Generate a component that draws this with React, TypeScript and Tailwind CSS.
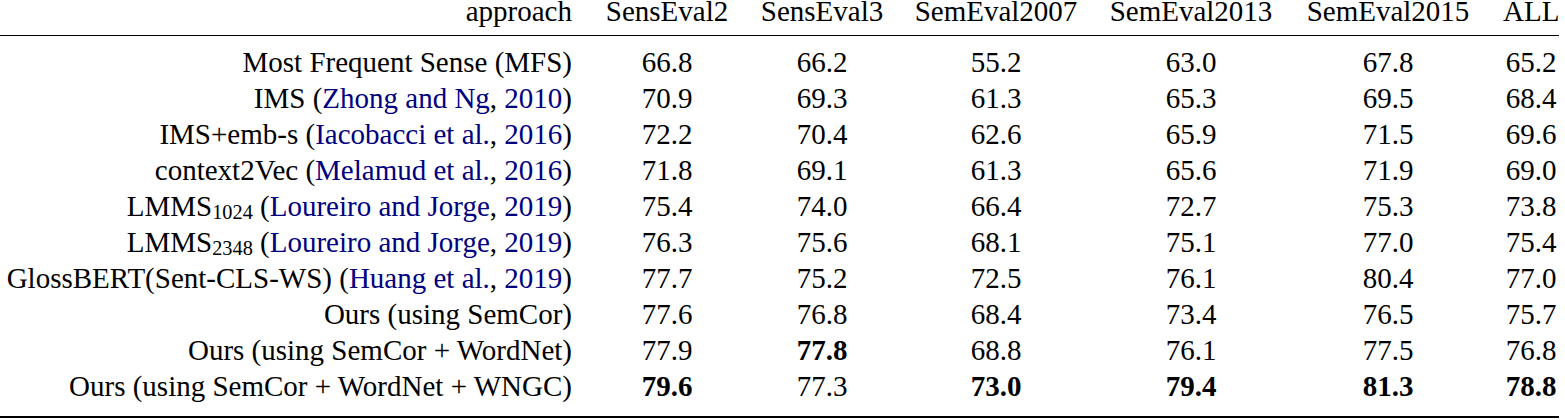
import React from "react";

type Cite = { who: string; year: string };
type Row = {
  name: React.ReactNode;
  cite?: Cite;
  scores: string[];
  bold?: number[];
};

const cols = "grid grid-cols-[590px_154px_156px_192px_198px_196px_73px]";

const rows: Row[] = [
  { name: "Most Frequent Sense (MFS)", scores: ["66.8", "66.2", "55.2", "63.0", "67.8", "65.2"] },
  { name: "IMS", cite: { who: "Zhong and Ng", year: "2010" }, scores: ["70.9", "69.3", "61.3", "65.3", "69.5", "68.4"] },
  { name: "IMS+emb-s", cite: { who: "Iacobacci et al.", year: "2016" }, scores: ["72.2", "70.4", "62.6", "65.9", "71.5", "69.6"] },
  { name: "context2Vec", cite: { who: "Melamud et al.", year: "2016" }, scores: ["71.8", "69.1", "61.3", "65.6", "71.9", "69.0"] },
  {
    name: (
      <>
        LMMS<sub className="text-[0.7em] bottom-[-0.17em]">1024</sub>
      </>
    ),
    cite: { who: "Loureiro and Jorge", year: "2019" },
    scores: ["75.4", "74.0", "66.4", "72.7", "75.3", "73.8"],
  },
  {
    name: (
      <>
        LMMS<sub className="text-[0.7em] bottom-[-0.17em]">2348</sub>
      </>
    ),
    cite: { who: "Loureiro and Jorge", year: "2019" },
    scores: ["76.3", "75.6", "68.1", "75.1", "77.0", "75.4"],
  },
  { name: "GlossBERT(Sent-CLS-WS)", cite: { who: "Huang et al.", year: "2019" }, scores: ["77.7", "75.2", "72.5", "76.1", "80.4", "77.0"] },
  { name: "Ours (using SemCor)", scores: ["77.6", "76.8", "68.4", "73.4", "76.5", "75.7"] },
  { name: "Ours (using SemCor + WordNet)", scores: ["77.9", "77.8", "68.8", "76.1", "77.5", "76.8"], bold: [1] },
  {
    name: "Ours (using SemCor + WordNet + WNGC)",
    scores: ["79.6", "77.3", "73.0", "79.4", "81.3", "78.8"],
    bold: [0, 2, 3, 4, 5],
  },
];

const headers = ["SensEval2", "SensEval3", "SemEval2007", "SemEval2013", "SemEval2015", "ALL"];

function Label({ row }: { row: Row }) {
  return (
    <div className="pr-[18px] text-right whitespace-nowrap">
      {row.name}
      {row.cite && (
        <>
          {" ("}
          <span className="text-[#000080]">{row.cite.who}</span>
          {", "}
          <span className="text-[#000080]">{row.cite.year}</span>
          {")"}
        </>
      )}
    </div>
  );
}

export default function App() {
  return (
    <div className="w-[1565px] h-[420px] bg-white overflow-hidden text-black text-[29px]">
      <div className="w-[1559px] font-['Liberation_Serif']">
        {/* header */}
        <div className={`${cols} h-[36px] leading-[22px] border-b-[1.5px] border-black`}>
          <div className="pr-[18px] text-right">approach</div>
          {headers.map((h, i) => (
            <div key={h} className={`text-center whitespace-nowrap ${i === 5 ? "pl-[17px]" : ""}`}>
              {h}
            </div>
          ))}
        </div>

        {/* body */}
        <div className="pt-[8px] pb-[12px] border-b-[2.5px] border-black">
          {rows.map((r, ri) => (
            <div key={ri} className={`${cols} h-[36px] leading-[36px]`}>
              <Label row={r} />
              {r.scores.map((s, i) => (
                <div
                  key={i}
                  className={`text-center ${i === 5 ? "pl-[17px]" : ""} ${r.bold?.includes(i) ? "font-bold" : ""}`}
                >
                  {s}
                </div>
              ))}
            </div>
          ))}
        </div>
      </div>
    </div>
  );
}
